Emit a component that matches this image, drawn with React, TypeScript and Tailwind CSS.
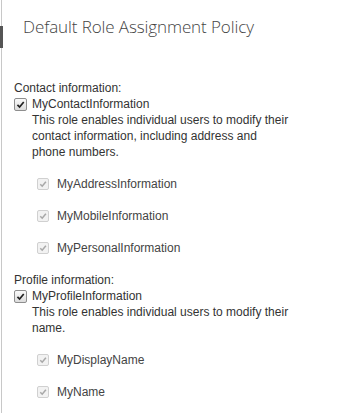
import React from 'react'

const body = { fontFamily: '"Liberation Sans", Arial, sans-serif' }
const heading = { fontFamily: '"Open Sans", "Noto Sans", sans-serif' }

function Check({ disabled }: { disabled?: boolean }) {
  return (
    <span
      className={
        disabled
          ? 'inline-flex h-[12px] w-[12px] shrink-0 items-center justify-center rounded-[2px] border border-[#d0d0d0] bg-[#f2f2f2]'
          : 'inline-flex h-[13px] w-[13px] shrink-0 items-center justify-center rounded-[2px] border border-[#8e8e8e] bg-gradient-to-b from-[#fafafa] to-[#dcdcdc]'
      }
    >
      <svg viewBox="0 0 10 10" className={disabled ? 'h-[8px] w-[8px]' : 'h-[9px] w-[9px]'}>
        <path
          d="M1.6 5.4 L4 7.8 L8.6 2.2"
          fill="none"
          stroke={disabled ? '#a8a8a8' : '#222'}
          strokeWidth="1.9"
        />
      </svg>
    </span>
  )
}

function SubItem({ label }: { label: string }) {
  return (
    <div className="flex h-[32px] items-center gap-[8px] pl-[37px]">
      <Check disabled />
      <span className="text-[#444]">{label}</span>
    </div>
  )
}

function Section({
  title,
  role,
  desc,
  subs,
}: {
  title: string
  role: string
  desc: string
  subs: string[]
}) {
  return (
    <div className="pl-[14px]">
      <div className="h-4">{title}</div>
      <div className="flex h-4 items-center gap-[5px]">
        <Check />
        <span>{role}</span>
      </div>
      <p className="w-[276px] pl-[18px]">{desc}</p>
      <div className="py-2 -ml-[14px]">
        {subs.map((s) => (
          <SubItem key={s} label={s} />
        ))}
      </div>
    </div>
  )
}

export default function App() {
  return (
    <div
      className="relative h-[413px] w-[340px] overflow-hidden bg-white text-[12px] leading-4 text-[#333]"
      style={body}
    >
      <div className="absolute left-[1px] top-0 h-full w-px bg-[#c8c8c8]" />
      <div className="absolute left-0 top-[26px] h-[22px] w-[3px] bg-[#555]" />
      <h1
        className="pl-[23px] pt-[13px] text-[17px] font-light leading-[28px] tracking-[-0.1px] text-[#444]"
        style={heading}
      >
        Default Role Assignment Policy
      </h1>
      <div className="mt-[39px]">
        <Section
          title="Contact information:"
          role="MyContactInformation"
          desc="This role enables individual users to modify their contact information, including address and phone numbers."
          subs={['MyAddressInformation', 'MyMobileInformation', 'MyPersonalInformation']}
        />
        <Section
          title="Profile information:"
          role="MyProfileInformation"
          desc="This role enables individual users to modify their name."
          subs={['MyDisplayName', 'MyName']}
        />
      </div>
    </div>
  )
}
